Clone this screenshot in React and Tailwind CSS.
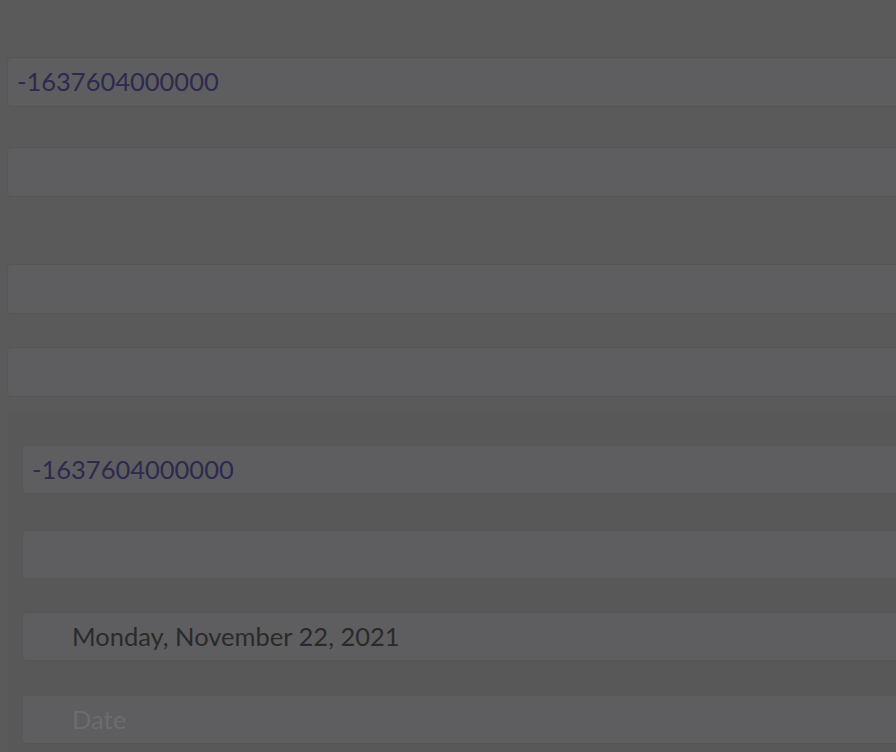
import React from "react";

const Field = ({ value, placeholder, indent, tone = "num", h = "h-[50px]" }) => {
  const color =
    tone === "num" ? "text-[#2c2a4e]" : tone === "date" ? "text-[#2a2a2a]" : "text-[#6c6c6c]";
  return (
    <div
      className={`${h} rounded-[4px] border border-[#565658] bg-[#5e5e60] flex items-center ${
        indent ? "pl-[49px]" : "pl-[9px]"
      }`}
    >
      <span className={`text-[25.5px] font-normal leading-none ${color}`}>
        {value || placeholder}
      </span>
    </div>
  );
};

export default function App() {
  return (
    <div
      className="w-[896px] h-[752px] overflow-hidden bg-[#5a5a5a]"
      style={{ fontFamily: "Lato, 'Noto Sans', sans-serif" }}
    >
      <div className="w-[940px] pl-[7px] pt-[57px] flex flex-col">
        <Field value="-1637604000000" />
        <div className="mt-[40px]">
          <Field />
        </div>
        <div className="mt-[67px]">
          <Field />
        </div>
        <div className="mt-[33px]">
          <Field />
        </div>

        {/* nested group */}
        <div className="mt-[16px] ml-[1px] bg-[#585858] pl-[14px] pt-[32px] pb-[20px] flex flex-col">
          <Field value="-1637604000000" h="h-[49px]" />
          <div className="mt-[36px]">
            <Field h="h-[49px]" />
          </div>
          <div className="mt-[33px]">
            <Field value="Monday, November 22, 2021" indent tone="date" h="h-[49px]" />
          </div>
          <div className="mt-[34px]">
            <Field placeholder="Date" indent tone="ph" h="h-[49px]" />
          </div>
        </div>
      </div>
    </div>
  );
}
